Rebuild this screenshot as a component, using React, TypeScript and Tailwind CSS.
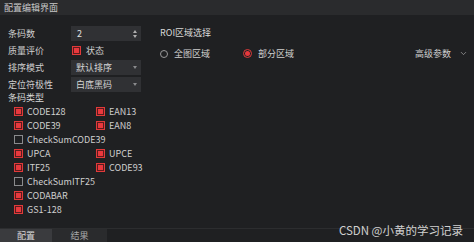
import { ChevronDown } from 'lucide-react'

const types: [string, boolean, string?, boolean?][] = [
  ['CODE128', true, 'EAN13', true],
  ['CODE39', true, 'EAN8', true],
  ['CheckSumCODE39', false],
  ['UPCA', true, 'UPCE', true],
  ['ITF25', true, 'CODE93', true],
  ['CheckSumITF25', false],
  ['CODABAR', true],
  ['GS1-128', true],
]

function Box({ on }: { on: boolean }) {
  return on ? (
    <span className="flex h-[9px] w-[9px] shrink-0 items-center justify-center border border-[#e03a3a] bg-[#5a1c1e]">
      <span className="h-[5px] w-[5px] bg-[#e8383d]" />
    </span>
  ) : (
    <span className="h-[9px] w-[9px] shrink-0 border border-[#8a8b8d] bg-[#1f2022]" />
  )
}

function Select({ label }: { label: string }) {
  return (
    <div className="flex h-[15px] w-[70px] items-center justify-between bg-[#303134] pl-[5px] pr-[4px] text-[#d4d4d4]">
      <span>{label}</span>
      <span className="h-0 w-0 border-x-[2.5px] border-t-[3px] border-x-transparent border-t-[#8a8b8d]" />
    </div>
  )
}

export default function App() {
  return (
    <div
      className="relative flex h-[242px] w-[474px] flex-col overflow-hidden bg-[#1f2022] text-[9px] leading-none text-[#cfcfcf]"
      style={{ fontFamily: '"Noto Sans CJK SC", "Liberation Sans", sans-serif' }}
    >
      <div className="flex h-[15px] items-center bg-[#2a2b2d] pl-[4px] text-[#c8c8c8]">配置编辑界面</div>

      <div className="flex flex-1">
        <div className="flex w-[160px] flex-col pl-[8px] pt-[11px]">
          <div className="flex h-[15px] items-center">
            <span className="w-[63px]">条码数</span>
            <div className="flex h-[15px] w-[70px] items-center justify-between bg-[#303134] pl-[6px] pr-[4px] text-[#e0e0e0]">
              <span>2</span>
              <span className="flex flex-col gap-[2px]">
                <span className="h-0 w-0 border-x-[2.5px] border-b-[3px] border-x-transparent border-b-[#b0b0b0]" />
                <span className="h-0 w-0 border-x-[2.5px] border-t-[3px] border-x-transparent border-t-[#b0b0b0]" />
              </span>
            </div>
          </div>
          <div className="mt-[2px] flex h-[15px] items-center">
            <span className="w-[64px]">质量评价</span>
            <Box on />
            <span className="ml-[5px]">状态</span>
          </div>
          <div className="mt-[2px] flex items-center">
            <span className="w-[63px]">排序模式</span>
            <Select label="默认排序" />
          </div>
          <div className="mt-[2px] flex items-center">
            <span className="w-[63px]">定位符极性</span>
            <Select label="白底黑码" />
          </div>
          <div className="mt-[1px] h-[9px] text-[#d8d8d8]">条码类型</div>
          <div className="mt-[2px] flex flex-col pl-[6px]">
            {types.map(([a, aOn, b, bOn]) => (
              <div key={a} className="flex h-[14px] items-center">
                <div className="flex w-[82px] items-center gap-[4px] whitespace-nowrap">
                  <Box on={aOn} />
                  <span>{a}</span>
                </div>
                {b && (
                  <div className="flex items-center gap-[4px]">
                    <Box on={!!bOn} />
                    <span>{b}</span>
                  </div>
                )}
              </div>
            ))}
          </div>
        </div>

        <div className="flex flex-1 flex-col pt-[13px]">
          <div className="text-[#d8d8d8]">ROI区域选择</div>
          <div className="mt-[12px] flex items-center pr-[6px]">
            <span className="h-[8px] w-[8px] rounded-full border border-[#9a9a9a]" />
            <span className="ml-[6px] w-[69px]">全图区域</span>
            <span className="flex h-[9px] w-[9px] items-center justify-center rounded-full border border-[#e03a3a]">
              <span className="h-[5px] w-[5px] rounded-full bg-[#e8383d]" />
            </span>
            <span className="ml-[6px]">部分区域</span>
            <span className="ml-auto">高级参数</span>
            <ChevronDown className="ml-[8px] h-[9px] w-[9px] text-[#a0a0a0]" strokeWidth={2} />
          </div>
        </div>
      </div>

      <div className="flex h-[14px] border-t border-[#2c2d2f]">
        <div className="flex w-[52px] items-center justify-center bg-[#3a3b3e] text-[#d8d8d8]">配置</div>
        <div className="flex w-[55px] items-center justify-center bg-[#2a2b2d] text-[#a8a8a8]">结果</div>
      </div>

      <div className="absolute bottom-[6px] right-[11px] text-[11.5px] text-[#d0d0d0]">CSDN @小黄的学习记录</div>
    </div>
  )
}
